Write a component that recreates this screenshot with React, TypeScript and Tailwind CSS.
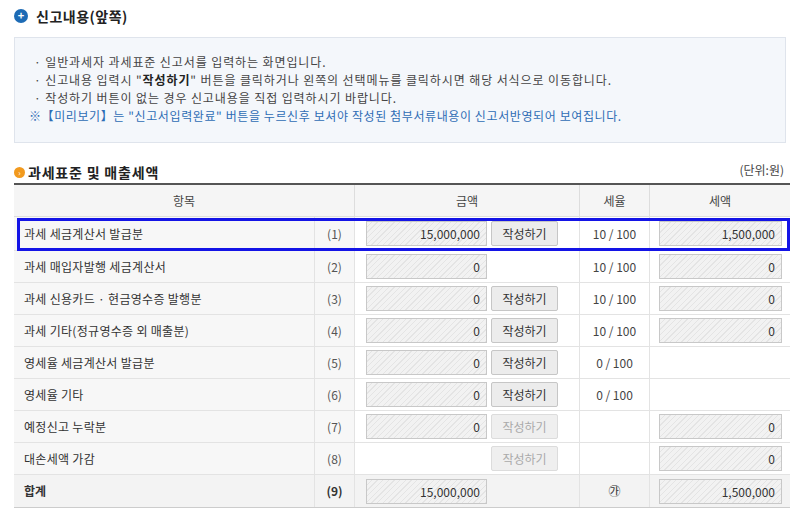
const rows = [
  { label: '과세 세금계산서 발급분', no: '(1)', amt: '15,000,000', btn: 'on', rate: '10 / 100', tax: '1,500,000', hl: true },
  { label: '과세 매입자발행 세금계산서', no: '(2)', amt: '0', btn: 'none', rate: '10 / 100', tax: '0' },
  { label: '과세 신용카드 · 현금영수증 발행분', no: '(3)', amt: '0', btn: 'on', rate: '10 / 100', tax: '0' },
  { label: '과세 기타(정규영수증 외 매출분)', no: '(4)', amt: '0', btn: 'on', rate: '10 / 100', tax: '0' },
  { label: '영세율 세금계산서 발급분', no: '(5)', amt: '0', btn: 'on', rate: '0 / 100', tax: null },
  { label: '영세율 기타', no: '(6)', amt: '0', btn: 'on', rate: '0 / 100', tax: null },
  { label: '예정신고 누락분', no: '(7)', amt: '0', btn: 'off', rate: '', tax: '0' },
  { label: '대손세액 가감', no: '(8)', amt: null, btn: 'off', rate: '', tax: '0' },
];

const hatch =
  'bg-[repeating-linear-gradient(135deg,#f2f2f2_0px,#f2f2f2_3px,#e4e4e4_3px,#e4e4e4_4px)]';

function Field({ value, w }: { value: string; w: string }) {
  return (
    <div className={`${w} h-[25px] border border-[#c8c8c8] ${hatch} text-right pr-[6px] leading-[23px] text-[#333]`}>
      {value}
    </div>
  );
}

function Btn({ off }: { off?: boolean }) {
  return (
    <div
      className={`w-[67px] h-[25px] rounded-[2px] border text-center leading-[23px] ${
        off ? 'border-[#dcdcdc] bg-[#efefef] text-[#aaa]' : 'border-[#c6c6c6] bg-[#ececec] text-[#333]'
      }`}
    >
      작성하기
    </div>
  );
}

export default function App() {
  return (
    <div className="w-[800px] h-[521px] bg-white text-[12px] text-[#333] px-[14px] pt-[6px]" style={{ fontFamily: '"Noto Sans CJK KR", "Noto Sans", sans-serif' }}>
      <div className="flex items-center gap-[8px] h-[20px]">
        <span className="w-[14px] h-[14px] rounded-full bg-[#1d6bb5] text-white text-[11px] leading-[13px] text-center font-bold">+</span>
        <span className="text-[14px] font-bold text-[#222] tracking-[0.5px]">신고내용(앞쪽)</span>
      </div>
      <div className="mt-[11px] h-[106px] border border-[#dfe4ec] bg-[#f4f7fb] pl-[19px] pt-[15px] leading-[18px] text-[12px] tracking-[0.9px] text-[#444]">
        <p>· 일반과세자 과세표준 신고서를 입력하는 화면입니다.</p>
        <p>· 신고내용 입력시 "<b className="text-[#222]">작성하기</b>" 버튼을 클릭하거나 왼쪽의 선택메뉴를 클릭하시면 해당 서식으로 이동합니다.</p>
        <p>· 작성하기 버튼이 없는 경우 신고내용을 직접 입력하시기 바랍니다.</p>
        <p className="text-[#2f6db5] -ml-[5px] tracking-[0.6px]">※【미리보기】는 "신고서입력완료" 버튼을 누르신후 보셔야 작성된 첨부서류내용이 신고서반영되어 보여집니다.</p>
      </div>
      <div className="mt-[18px] flex items-end justify-between h-[22px]">
        <div className="flex items-center gap-[3px]">
          <span className="w-[11px] h-[11px] rounded-full bg-[#f29a1e] text-white text-[8px] leading-[11px] text-center">›</span>
          <span className="text-[14px] font-bold text-[#222] tracking-[0.8px]">과세표준 및 매출세액</span>
        </div>
        <span className="text-[12px] text-[#444] pr-[2px] mb-[4px]">(단위:원)</span>
      </div>
      <div className="border-t-2 border-[#555] w-[776px]">
        <div className="flex h-[32px] bg-[#f5f5f5] border-b border-[#ddd] items-center text-[#444]">
          <div className="w-[341px] text-center border-r border-[#ddd] h-full leading-[32px]">항목</div>
          <div className="w-[225px] text-center border-r border-[#ddd] h-full leading-[32px]">금액</div>
          <div className="w-[70px] text-center border-r border-[#ddd] h-full leading-[32px]">세율</div>
          <div className="flex-1 text-center leading-[32px]">세액</div>
        </div>
        {rows.map((r) => (
          <div key={r.no} className={`relative flex h-[32px] border-b border-[#e3e3e3] items-center ${r.hl ? 'h-[34px]' : ''}`}>
            {r.hl && <div className="absolute left-[3px] right-0 top-[1px] bottom-[-1px] border-[3px] border-[#1414e6] pointer-events-none" />}
            <div className="w-[301px] h-full bg-[#f7f7f7] border-r border-[#e3e3e3] pl-[10px] flex items-center tracking-[0.3px]">{r.label}</div>
            <div className="w-[40px] h-full bg-[#f7f7f7] border-r border-[#e3e3e3] flex items-center justify-center text-[#555]">{r.no}</div>
            <div className="w-[225px] h-full border-r border-[#e3e3e3] flex items-center pl-[11px] gap-[4px]">
              {r.amt !== null ? <Field value={r.amt} w="w-[121px]" /> : <div className="w-[121px]" />}
              {r.btn === 'on' && <Btn />}
              {r.btn === 'off' && <Btn off />}
            </div>
            <div className="w-[70px] h-full border-r border-[#e3e3e3] flex items-center justify-center text-[#444]">{r.rate}</div>
            <div className="flex-1 h-full flex items-center pl-[9px]">
              {r.tax !== null && <Field value={r.tax} w="w-[123px]" />}
            </div>
          </div>
        ))}
        <div className="flex h-[33px] bg-[#f3f3f3] border-b border-[#ccc] items-center">
          <div className="w-[301px] h-full border-r border-[#e3e3e3] pl-[10px] flex items-center font-bold">합계</div>
          <div className="w-[40px] h-full border-r border-[#e3e3e3] flex items-center justify-center font-bold">(9)</div>
          <div className="w-[225px] h-full border-r border-[#e3e3e3] flex items-center pl-[11px]">
            <Field value="15,000,000" w="w-[121px]" />
          </div>
          <div className="w-[70px] h-full border-r border-[#e3e3e3] flex items-center justify-center">㉮</div>
          <div className="flex-1 h-full flex items-center pl-[9px]">
            <Field value="1,500,000" w="w-[123px]" />
          </div>
        </div>
      </div>
    </div>
  );
}
